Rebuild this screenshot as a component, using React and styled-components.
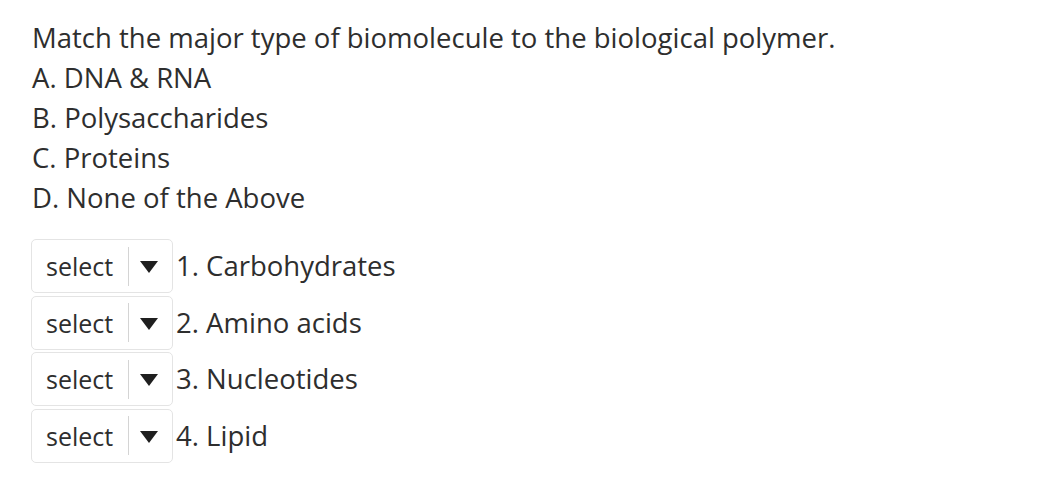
import React from 'react'
import styled, { createGlobalStyle } from 'styled-components'

const GlobalStyle = createGlobalStyle`
    body {
        margin: 0;
        background: #ffffff;
        font-family: "Open Sans", "Liberation Sans", sans-serif;
        color: #2e2e2e;
    }
`;

const choices = [
    "A. DNA & RNA",
    "B. Polysaccharides",
    "C. Proteins",
    "D. None of the Above",
];

const items = [
    "1. Carbohydrates",
    "2. Amino acids",
    "3. Nucleotides",
    "4. Lipid",
];

const App = () => {
    return (
        <>
            <GlobalStyle />
            <StQuestion>
                <StPrompt>Match the major type of biomolecule to the biological polymer.</StPrompt>
                {choices.map(choice => (
                    <StChoice key={choice}>{choice}</StChoice>
                ))}
                <StMatchList>
                    {items.map(item => (
                        <StRow key={item}>
                            <StSelect>
                                <StSelectText>select</StSelectText>
                                <StDivider />
                                <StArrow />
                            </StSelect>
                            <StLabel>{item}</StLabel>
                        </StRow>
                    ))}
                </StMatchList>
            </StQuestion>
        </>
    )
}

export default App

const StQuestion = styled.div`
    padding: 18px 0 0 32px;
    font-size: 27.5px;
    line-height: 40px;
`;

const StPrompt = styled.div``;

const StChoice = styled.div``;

const StMatchList = styled.div`
    display: flex;
    flex-direction: column;
    gap: 2.67px;
    margin-top: 21px;
    margin-left: -1px;
`;

const StRow = styled.div`
    display: flex;
    align-items: center;
    gap: 3px;
`;

const StSelect = styled.div`
    box-sizing: border-box;
    width: 142px;
    height: 54px;
    display: flex;
    align-items: center;
    padding-left: 14px;
    border: 1px solid #e4e4e4;
    border-radius: 5px;
    background: #ffffff;
    font-size: 25px;
`;

const StSelectText = styled.span`
    width: 69px;
`;

const StDivider = styled.span`
    width: 1px;
    height: 39px;
    margin-left: 13px;
    background: #d4d4d4;
`;

const StArrow = styled.span`
    width: 0;
    height: 0;
    margin-left: 11px;
    margin-top: 2px;
    border-left: 9.5px solid transparent;
    border-right: 9.5px solid transparent;
    border-top: 12px solid #1f1f1f;
`;

const StLabel = styled.span``;
